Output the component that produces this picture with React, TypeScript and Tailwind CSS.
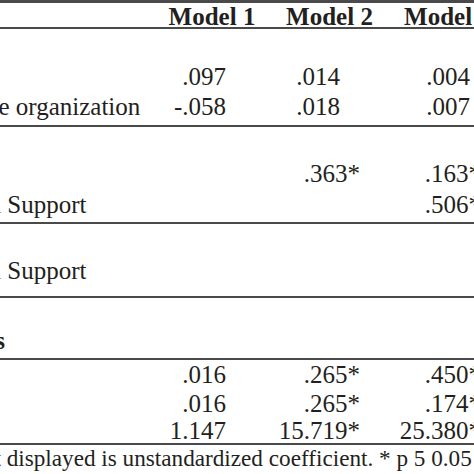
import clsx from "clsx";

type RowProps = {
  label?: string;
  m1?: string;
  m2?: string;
  m3?: string;
  h: string;
  indent?: boolean;
  bold?: boolean;
};

// values with a trailing star sit further right than plain ones, as in the source table
function Row({ label, m1, m2, m3, h, indent, bold }: RowProps) {
  return (
    <div className={clsx("flex items-center", h)}>
      <div
        className={clsx(
          "w-[299px] shrink-0 whitespace-nowrap",
          indent && "pl-[25px]",
          bold && "font-bold"
        )}
      >
        {label}
      </div>
      <div className="w-[120px] shrink-0 pr-[46px] text-right">{m1}</div>
      <div
        className={clsx(
          "w-[115px] shrink-0 text-right",
          m2?.endsWith("*") ? "pr-[27px]" : "pr-[47px]"
        )}
      >
        {m2}
      </div>
      <div
        className={clsx(
          "w-[121px] shrink-0 text-right",
          m3?.endsWith("*") ? "pr-[27px]" : "pr-[38px]"
        )}
      >
        {m3}
      </div>
    </div>
  );
}

export default function App() {
  return (
    <div className="h-[474px] w-[474px] overflow-hidden bg-white font-['Liberation_Serif',serif] text-[25px] leading-none text-[#231f20]">
      <div className="-ml-[147px] flex w-[655px] flex-col">
        {/* header */}
        <div className="flex h-[29px] items-start border-t-[3px] border-b-2 border-[#4a4a4a] pt-px font-bold">
          <div className="w-[299px] shrink-0" />
          <div className="w-[120px] shrink-0 text-center">Model 1</div>
          <div className="w-[115px] shrink-0 text-center">Model 2</div>
          <div className="w-[121px] shrink-0 text-center">Model 3</div>
        </div>

        {/* control variables */}
        <div className="flex flex-col border-b-2 border-[#4a4a4a] pt-[32px] pb-[4px]">
          <Row h="h-[30px]" indent label="Age" m1=".097" m2=".014" m3=".004" />
          <Row
            h="h-[30px]"
            indent
            label="Tenure in the organization"
            m1="-.058"
            m2=".018"
            m3=".007"
          />
        </div>

        {/* predictors */}
        <div className="flex flex-col border-b-2 border-[#4a4a4a] pt-[31px] pb-[2px]">
          <Row h="h-[31px]" label="Engagement" m2=".363*" m3=".163*" />
          <Row h="h-[31px]" label="Organizational Support" m3=".506*" />
        </div>

        {/* interaction */}
        <div className="flex flex-col border-b-2 border-[#4a4a4a] pt-px pb-[11px]">
          <Row h="h-[30px]" label="Engagement ×" />
          <Row h="h-[30px]" label="Organizational Support" />
        </div>

        {/* model statistics */}
        <div className="flex flex-col border-b-2 border-[#4a4a4a] pt-[27px] pb-[3px]">
          <Row h="h-[30px]" bold label="Model Results" />
        </div>

        <div className="flex flex-col border-b-2 border-[#4a4a4a]">
          <Row h="h-[28px]" label="R²" m1=".016" m2=".265*" m3=".450*" />
          <Row h="h-[30px]" label="Adjusted R²" m1=".016" m2=".265*" m3=".174*" />
          <Row h="h-[25px]" label="F" m1="1.147" m2="15.719*" m3="25.380*" />
        </div>

        <p className="whitespace-nowrap pt-px pl-[44px] text-[23.2px] leading-[24px]">
          Coefficient displayed is unstandardized coefficient. * p 5 0.05
        </p>
      </div>
    </div>
  );
}
